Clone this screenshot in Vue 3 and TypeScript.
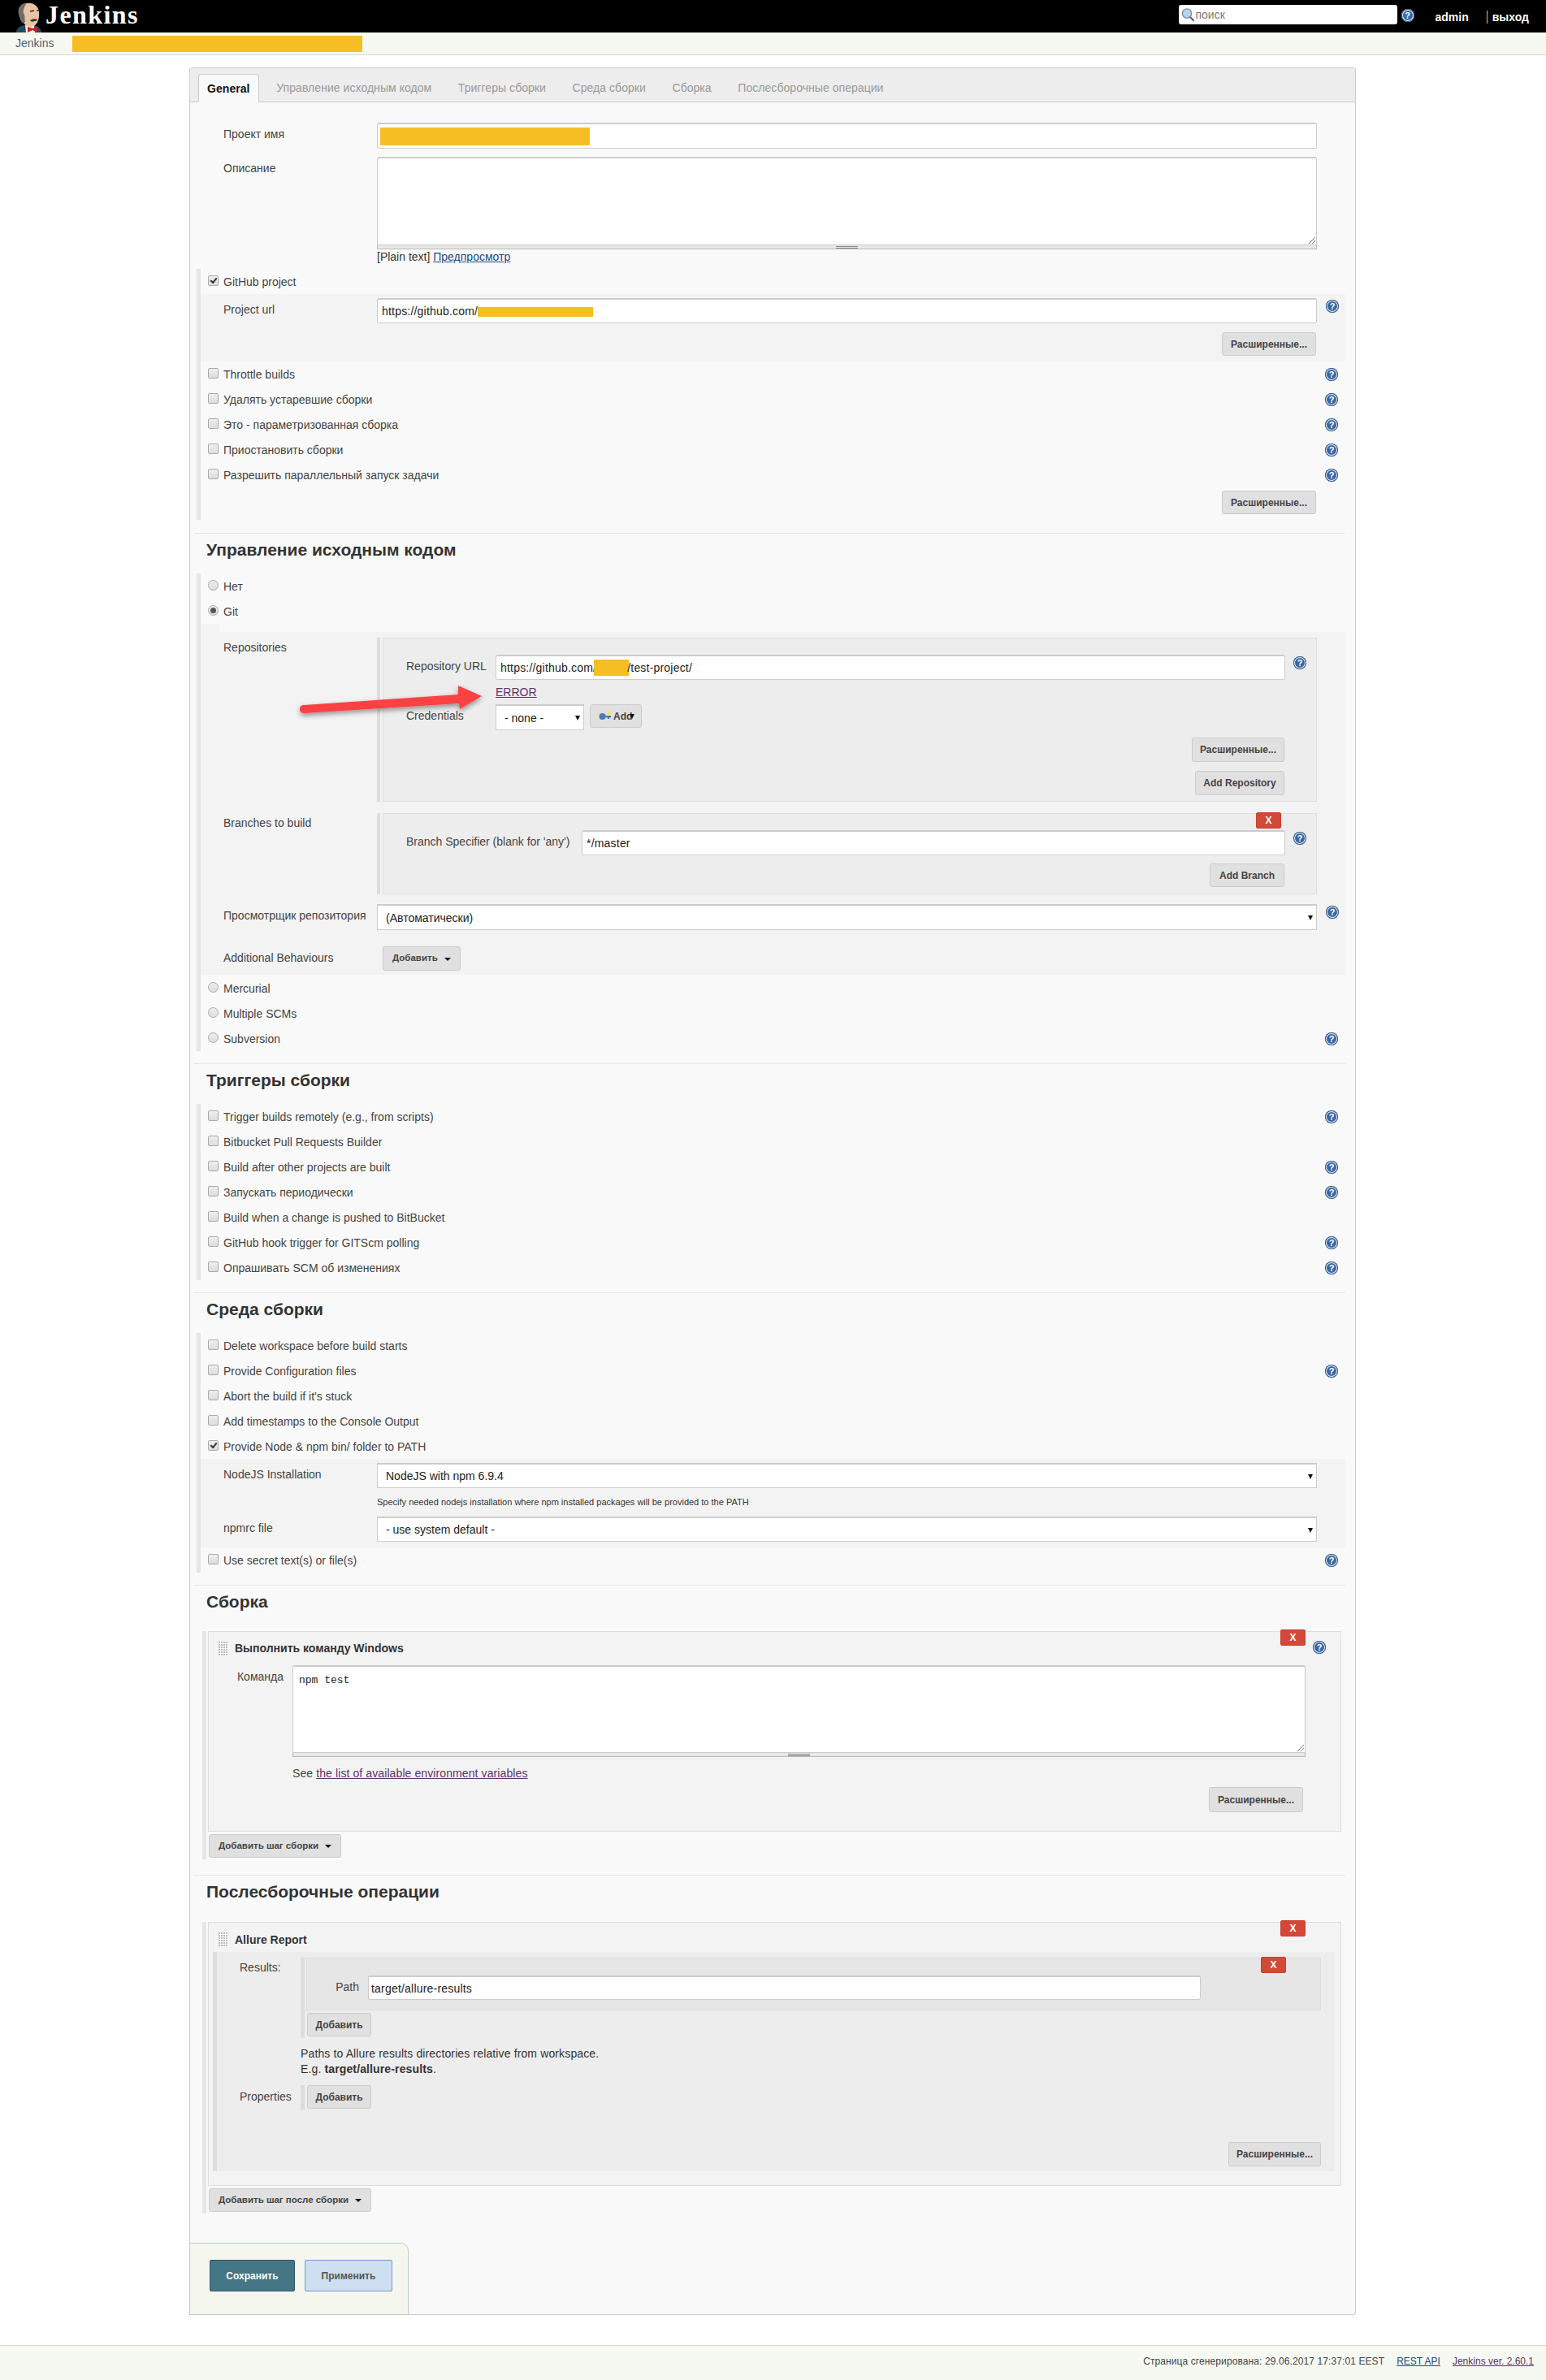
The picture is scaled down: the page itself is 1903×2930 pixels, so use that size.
<script setup lang="ts">
const tabs: string[] = ['Управление исходным кодом', 'Триггеры сборки', 'Среда сборки', 'Сборка', 'Послесборочные операции']
interface Row { label: string; help: boolean; checked?: boolean }
const generalRows: Row[] = [
  { label: 'Throttle builds', help: true },
  { label: 'Удалять устаревшие сборки', help: true },
  { label: 'Это - параметризованная сборка', help: true },
  { label: 'Приостановить сборки', help: true },
  { label: 'Разрешить параллельный запуск задачи', help: true },
]
const scmTail: Row[] = [
  { label: 'Mercurial', help: false },
  { label: 'Multiple SCMs', help: false },
  { label: 'Subversion', help: true },
]
const triggerRows: Row[] = [
  { label: 'Trigger builds remotely (e.g., from scripts)', help: true },
  { label: 'Bitbucket Pull Requests Builder', help: false },
  { label: 'Build after other projects are built', help: true },
  { label: 'Запускать периодически', help: true },
  { label: 'Build when a change is pushed to BitBucket', help: false },
  { label: 'GitHub hook trigger for GITScm polling', help: true },
  { label: 'Опрашивать SCM об изменениях', help: true },
]
const envRows: Row[] = [
  { label: 'Delete workspace before build starts', help: false },
  { label: 'Provide Configuration files', help: true },
  { label: "Abort the build if it's stuck", help: false },
  { label: 'Add timestamps to the Console Output', help: false },
  { label: 'Provide Node & npm bin/ folder to PATH', help: false, checked: true },
]
</script>

<template>
  <div class="page">
    <header class="top">
      <div class="brand">
        <svg class="logo" width="34" height="40" viewBox="0 0 34 40">
          <path d="M0 40c0-5 4-8 10-9h12c4 1 8 3 9 9z" fill="#1f4a66" />
          <path d="M11 31h11l1 9H12z" fill="#eee" />
          <path d="M4 17C2 9 6 4 13 4c8-1 14 3 15 11 1 9-3 18-10 18-6 0-9-4-10-8z" fill="#e9c4a4" />
          <path d="M13 4C6 4 1 9 3 18c1 5 3 9 6 11l2-2c-1-3 0-6-1-9-1-2-2-3-1-6 1-4 2-6 4-8z" fill="#6f6f6a" />
          <path d="M17 25c3-2 6-2 9-1-1 2-2 2-4 2-1 1-4 1-5-1z" fill="#333" />
          <path d="M17 14l5-1M25 13l3 0" stroke="#333" stroke-width="1.4" fill="none" />
          <path d="M14 33l6 2 6-2v7l-6-3-6 3z" fill="#c6201f" />
        </svg>
        <span class="wordmark">Jenkins</span>
      </div>
      <div class="tools">
        <div class="search">
          <svg width="17" height="18" viewBox="0 0 17 18">
            <path d="M10 11l5 5" stroke="#666" stroke-width="2.4" stroke-linecap="round" />
            <circle cx="7" cy="7.5" r="5.6" fill="#b9d3ec" stroke="#7b8fa3" stroke-width="1.4" />
          </svg>
          <span>поиск</span>
        </div>
        <span class="help top-help">?</span>
        <a class="user">admin</a>
        <a class="logout">выход</a>
      </div>
    </header>

    <nav class="crumb">
      <a class="crumb-link">Jenkins</a>
      <span class="redact crumb-red"></span>
    </nav>

    <main class="main">
      <form class="panel" @submit.prevent>
        <div class="tabs">
          <span class="tab active">General</span>
          <span class="tab-gap"></span>
          <span v-for="t in tabs" :key="t" class="tab">{{ t }}</span>
        </div>

        <div class="body">
          <div class="field free">
            <label class="lbl">Проект имя</label>
            <div class="input name-input"><span class="redact name-red"></span></div>
          </div>
          <div class="field free desc">
            <label class="lbl">Описание</label>
            <div>
              <div class="textarea tall"><i class="corner"></i></div>
              <div class="grip"><i></i></div>
              <div class="preview">[Plain text] <a class="lnk">Предпросмотр</a></div>
            </div>
          </div>

          <section class="sec s1">
            <div class="row"><span class="check on"></span><span>GitHub project</span></div>
            <div class="block b-github">
              <div class="field">
                <label class="lbl">Project url</label>
                <div class="input">https://github.com/<span class="redact url-red"></span></div>
                <span class="help">?</span>
              </div>
              <div class="btn-line gh"><button class="btn adv">Расширенные...</button></div>
            </div>
            <div v-for="r in generalRows" :key="r.label" class="row">
              <span class="check"></span><span>{{ r.label }}</span>
              <span v-if="r.help" class="help end"></span>
            </div>
            <div class="btn-line second"><button class="btn adv">Расширенные...</button></div>
          </section>

          <div class="heading">Управление исходным кодом</div>
          <section class="sec s2">
            <div class="row"><span class="radio"></span><span>Нет</span></div>
            <div class="row"><span class="radio on"></span><span>Git</span></div>
            <div class="git-top"></div>
            <div class="block b-git">
              <div class="field repos">
                <label class="lbl t">Repositories</label>
                <div class="rep">
                  <div class="rep-box box-a">
                    <div class="inner-row url-row">
                      <label class="lbl">Repository URL</label>
                      <div class="input">https://github.com/<span class="redact repo-red"></span>/test-project/</div>
                      <span class="help">?</span>
                    </div>
                    <a class="error">ERROR</a>
                    <div class="inner-row">
                      <label class="lbl">Credentials</label>
                      <div class="cred">
                        <div class="select small"><span>- none -</span><i class="arrow"></i></div>
                        <button class="btn add-key">
                          <svg width="16" height="14" viewBox="0 0 16 14">
                            <rect x="6" y="6" width="9" height="2.4" fill="#4f7ab5" />
                            <rect x="11" y="8" width="2" height="2" fill="#4f7ab5" />
                            <circle cx="4.5" cy="7" r="4" fill="#4f7ab5" />
                            <circle cx="12.5" cy="3" r="2.2" fill="#f6e84e" />
                          </svg>
                          <span>Add</span><i class="arrow key-arrow"></i>
                        </button>
                      </div>
                    </div>
                    <div class="btn-stack">
                      <button class="btn adv b30">Расширенные...</button>
                      <button class="btn b30 repo-add">Add Repository</button>
                    </div>
                  </div>
                </div>
              </div>
              <div class="field branches">
                <label class="lbl t">Branches to build</label>
                <div class="rep">
                  <div class="rep-box box-b">
                    <button class="x x-branch">X</button>
                    <div class="inner-row branch-row">
                      <label class="lbl">Branch Specifier (blank for 'any')</label>
                      <div class="input">*/master</div>
                      <span class="help">?</span>
                    </div>
                    <div class="btn-stack one"><button class="btn">Add Branch</button></div>
                  </div>
                </div>
              </div>
              <div class="field viewer">
                <label class="lbl">Просмотрщик репозитория</label>
                <div class="select h32"><span>(Автоматически)</span><i class="arrow"></i></div>
                <span class="help">?</span>
              </div>
              <div class="field behaviours">
                <label class="lbl">Additional Behaviours</label>
                <div><button class="btn b30 drop">Добавить <i class="arrow"></i></button></div>
              </div>
            </div>
            <div class="tail">
              <div v-for="r in scmTail" :key="r.label" class="row">
                <span class="radio"></span><span>{{ r.label }}</span>
                <span v-if="r.help" class="help end"></span>
              </div>
            </div>
          </section>

          <div class="heading">Триггеры сборки</div>
          <section class="sec s3">
            <div v-for="r in triggerRows" :key="r.label" class="row">
              <span class="check"></span><span>{{ r.label }}</span>
              <span v-if="r.help" class="help end"></span>
            </div>
          </section>

          <div class="heading">Среда сборки</div>
          <section class="sec s3">
            <div v-for="r in envRows" :key="r.label" class="row">
              <span class="check" :class="{ on: r.checked }"></span><span>{{ r.label }}</span>
              <span v-if="r.help" class="help end"></span>
            </div>
            <div class="block b-node">
              <div class="field">
                <label class="lbl">NodeJS Installation</label>
                <div class="select"><span>NodeJS with npm 6.9.4</span><i class="arrow"></i></div>
              </div>
              <div class="hint">Specify needed nodejs installation where npm installed packages will be provided to the PATH</div>
              <div class="field">
                <label class="lbl">npmrc file</label>
                <div class="select"><span>- use system default -</span><i class="arrow"></i></div>
              </div>
            </div>
            <div class="row"><span class="check"></span><span>Use secret text(s) or file(s)</span><span class="help end"></span></div>
          </section>

          <div class="heading">Сборка</div>
          <section class="steps build">
            <div class="step step-build">
              <button class="x x-step">X</button>
              <div class="step-head">
                <i class="drag"></i><strong>Выполнить команду Windows</strong>
                <span class="help step-help"></span>
              </div>
              <div class="cmd">
                <label class="lbl cmd-lbl">Команда</label>
                <div>
                  <div class="textarea cmd-area">npm test<i class="corner"></i></div>
                  <div class="grip"><i></i></div>
                </div>
              </div>
              <div class="see">See <a class="lnk visited">the list of available environment variables</a></div>
              <div class="btn-line step-adv"><button class="btn adv b31">Расширенные...</button></div>
            </div>
            <button class="btn drop add-step">Добавить шаг сборки <i class="arrow"></i></button>
          </section>

          <div class="heading">Послесборочные операции</div>
          <section class="steps post">
            <div class="step step-post">
              <button class="x x-step">X</button>
              <div class="step-head allure-head">
                <i class="drag"></i><strong>Allure Report</strong>
              </div>
              <div class="allure">
                <div class="al-row al-results">
                  <label class="lbl t">Results:</label>
                  <div class="al-rep">
                    <div class="al-box">
                      <button class="x x-path">X</button>
                      <div class="path-row">
                        <label class="lbl path-lbl">Path</label>
                        <div class="input path-input">target/allure-results</div>
                      </div>
                    </div>
                    <button class="btn small-add first">Добавить</button>
                  </div>
                </div>
                <div class="al-text">
                  Paths to Allure results directories relative from workspace.<br />
                  E.g. <b>target/allure-results</b>.
                </div>
                <div class="al-row al-props">
                  <label class="lbl">Properties</label>
                  <div class="al-rep"><button class="btn small-add">Добавить</button></div>
                </div>
                <div class="btn-line al-adv"><button class="btn adv b30">Расширенные...</button></div>
              </div>
            </div>
            <button class="btn drop add-step">Добавить шаг после сборки <i class="arrow"></i></button>
          </section>

          <div class="savebar">
            <button class="save">Сохранить</button>
            <button class="apply">Применить</button>
          </div>
        </div>
      </form>
    </main>

    <footer class="foot">
      <span class="gen">Страница сгенерирована: 29.06.2017 17:37:01 EEST</span>
      <a class="lnk">REST API</a>
      <a class="lnk visited">Jenkins ver. 2.60.1</a>
    </footer>

    <svg class="red-arrow" width="250" height="60" viewBox="0 0 250 60">
      <defs>
        <filter id="arrowShadow" x="-10%" y="-30%" width="120%" height="170%">
          <feDropShadow dx="0" dy="3" stdDeviation="3" flood-color="#000" flood-opacity="0.4" />
        </filter>
      </defs>
      <path
        d="M14 32 L204 19 L204 8 L233 21 L206 37 L205 30 L15 42 Q9 42 9 37 Q9 32 14 32 Z"
        fill="#fb4343"
        filter="url(#arrowShadow)"
      />
    </svg>
  </div>
</template>

<style>
html, body { margin: 0; background: #fff; }
</style>

<style scoped>
.page {
  position: relative;
  width: 1903px;
  height: 2930px;
  overflow: hidden;
  display: flex;
  flex-direction: column;
  font: 14px/1.3 "Liberation Sans", Arial, sans-serif;
  color: #333;
  background: #fff;
}
a { cursor: pointer; }
.top {
  height: 40px;
  flex: none;
  background: #000;
  display: flex;
  justify-content: space-between;
}
.brand { display: flex; align-items: flex-start; padding-left: 20px; }
.logo { display: block; }
.wordmark {
  margin-left: 2px;
  font: bold 32px/36px "Liberation Serif", serif;
  letter-spacing: 1.4px;
  color: #fff;
}
.tools { display: flex; align-items: flex-start; color: #fff; }
.search {
  margin-top: 6px;
  width: 269px;
  height: 24px;
  box-sizing: border-box;
  background: #fff;
  border-radius: 3px;
  display: flex;
  align-items: center;
  gap: 1px;
  padding-left: 3px;
  color: #777;
  font-size: 14px;
}
.tools .top-help { margin: 11px 0 0 5px; width: 16px; height: 16px; }
.user { margin: 13px 0 0 26px; font: bold 14px/16px "Liberation Sans", sans-serif; color: #fff; }
.logout {
  margin: 13px 21px 0 22px;
  padding-left: 6px;
  border-left: 1px solid #f5be23;
  font: bold 14px/16px "Liberation Sans", sans-serif;
  color: #fff;
}
.crumb {
  height: 28px;
  flex: none;
  box-sizing: border-box;
  background: #f6f8f2;
  border-bottom: 1px solid #d3d7cf;
  display: flex;
  align-items: center;
  padding-left: 19px;
}
.crumb-link { color: #4f5f70; font-size: 14px; width: 70px; }
.redact { display: inline-block; background: #f5be23; }
.crumb-red { width: 357px; height: 20px; }
.main { flex: 1; padding: 15px 0 0 233px; }
.panel {
  width: 1436px;
  height: 2767px;
  box-sizing: border-box;
  border: 1px solid #ccc;
  border-radius: 3px;
  background: #f9f9f9;
  display: flex;
  flex-direction: column;
}
.tabs {
  height: 42px;
  flex: none;
  box-sizing: border-box;
  background: #ededed;
  border-bottom: 1px solid #ccc;
  display: flex;
  padding-left: 10px;
  padding-top: 7px;
  color: #999;
}
.tab { padding: 0 16.3px; line-height: 34px; white-space: nowrap; letter-spacing: 0.05px; }
.tab-gap { width: 5px; }
.tab.active {
  padding: 0 10px;
  width: 75px;
  box-sizing: border-box;
  height: 35px;
  color: #111;
  font-weight: bold;
  background: #f9f9f9;
  border: 1px solid #ccc;
  border-bottom: 0;
  border-radius: 4px 4px 0 0;
}
.body { flex: 1; padding-top: 25px; display: flex; flex-direction: column; }
.field {
  display: grid;
  grid-template-columns: 189px 1157px 35px;
  padding-left: 28px;
  align-items: start;
}
.field.free { padding-left: 41px; margin-bottom: 10px; }
.field.free.desc { margin-bottom: 0; height: 138px; }
.lbl { line-height: 28px; white-space: nowrap; color: #444; }
.lbl.t { line-height: 24px; }
.input {
  height: 31px;
  box-sizing: border-box;
  border: 1px solid #ccc;
  border-top-width: 2px;
  border-radius: 3px;
  background: #fff;
  padding-left: 5px;
  line-height: 30px;
  color: #222;
  white-space: nowrap;
  display: flex;
  align-items: center;
  letter-spacing: 0.2px;
}
.name-input { height: 32px; padding-left: 3px; }
.name-red { width: 258px; height: 22px; }
.url-red { width: 142px; height: 12px; margin-top: 2px; }
.repo-red { width: 43px; height: 20px; margin-left: -3px; margin-right: -2px; }
.textarea {
  position: relative;
  box-sizing: border-box;
  background: #fff;
  border: 1px solid #ccc;
  border-top-width: 2px;
  border-radius: 3px 3px 0 0;
}
.tall { height: 109px; }
.corner {
  position: absolute;
  right: 1px;
  bottom: 1px;
  width: 8px;
  height: 8px;
  background: linear-gradient(135deg, transparent 45%, #777 46%, #777 54%, transparent 55%, transparent 72%, #777 73%, #777 80%, transparent 81%);
}
.grip {
  height: 5px;
  box-sizing: border-box;
  background: #e8e8e6;
  border: 1px solid #bbb;
  border-top: 0;
  display: flex;
  justify-content: center;
  align-items: center;
}
.grip i {
  width: 27px;
  height: 3px;
  box-sizing: border-box;
  border-top: 1px solid #888;
  border-bottom: 1px solid #888;
}
.preview { line-height: 18px; }
.lnk { color: #204a87; text-decoration: underline; }
.lnk.visited { color: #5c3566; }
.sec {
  margin: 0 12px 0 8px;
  border-left: 5px solid #e6e6e6;
  position: relative;
}
.s1 { padding-bottom: 7px; margin-bottom: 16px; }
.s2 { margin-bottom: 15px; }
.s3 { margin-bottom: 15px; }
.row {
  height: 31px;
  box-sizing: border-box;
  padding: 1px 0 0 9px;
  display: flex;
  align-items: center;
  gap: 6px;
  color: #444;
}
.check {
  width: 13px;
  height: 13px;
  box-sizing: border-box;
  margin-bottom: 4px;
  border: 1px solid #aaa;
  border-radius: 2px;
  background: linear-gradient(#eee, #ddd);
  display: inline-flex;
  align-items: center;
  justify-content: center;
}
.check.on::after {
  content: "";
  width: 6px;
  height: 3px;
  margin-top: -2px;
  border-left: 2px solid #333;
  border-bottom: 2px solid #333;
  transform: rotate(-50deg);
}
.radio {
  width: 13px;
  height: 13px;
  box-sizing: border-box;
  margin-bottom: 4px;
  border: 1px solid #aaa;
  border-radius: 50%;
  background: linear-gradient(#eee, #ddd);
  display: inline-flex;
  align-items: center;
  justify-content: center;
}
.radio.on::after {
  content: "";
  width: 7px;
  height: 7px;
  border-radius: 50%;
  background: #555;
}
.help {
  width: 16px;
  height: 16px;
  box-sizing: border-box;
  border-radius: 50%;
  background: #3a66a3;
  box-shadow: inset 0 0 0 1px #2b5288, inset 0 0 0 2px #e8eef6;
  color: #fff;
  font: bold 11px/16px "Liberation Sans", sans-serif;
  text-align: center;
  display: inline-block;
  margin-left: 11px;
  margin-top: 2px;
}
.help.end { margin: 0 9px 0 auto; position: relative; }
.help.end::before { content: "?"; }
.block { background: #f3f3f3; }
.b-github { padding: 5px 0 7px; }
.btn-line { display: flex; justify-content: flex-end; }
.gh { margin-top: 11px; padding-right: 36px; }
.second { margin-top: 4px; padding-right: 36px; }
.btn {
  height: 29px;
  box-sizing: border-box;
  padding: 0 11px;
  border: 1px solid #ccc;
  border-radius: 3px;
  background: #e0e0e0;
  color: #444;
  font: bold 12px/1 "Liberation Sans", sans-serif;
  white-space: nowrap;
}
.adv { width: 116px; padding: 0; }
.b30 { height: 30px; }
.b31 { height: 31px; }
.git-top { width: 23px; height: 10px; background: #f3f3f3; }
.b-git { padding: 7px 0 5px; }
.rep { border-left: 4px solid #ddd; padding-left: 3px; }
.rep-box { position: relative; border: 1px solid #ddd; background: #ededed; }
.box-a { padding: 20px 0 7px 28px; }
.box-b { padding: 20px 0 8px 28px; }
.inner-row { display: grid; grid-template-columns: 110px 972px 37px; align-items: start; }
.branch-row { grid-template-columns: 216px 866px 37px; }
.inner-row .help { margin-left: 10px; }
.error {
  display: block;
  margin-left: 110px;
  height: 30px;
  line-height: 30px;
  color: #5c3566;
  text-decoration: underline;
}
.cred { display: flex; gap: 7px; align-items: flex-start; }
.select {
  position: relative;
  height: 31px;
  box-sizing: border-box;
  border: 1px solid #ccc;
  border-top-width: 2px;
  background: #fff;
  padding-left: 10px;
  line-height: 30px;
  color: #222;
  display: flex;
  align-items: center;
}
.h32 { height: 32px; }
.select .arrow { position: absolute; right: 4px; top: 12px; }
.select.small { width: 109px; height: 32px; }
.arrow {
  display: inline-block;
  width: 0;
  height: 0;
  border-left: 3.5px solid transparent;
  border-right: 3.5px solid transparent;
  border-top: 6px solid #111;
}
.add-key {
  width: 64px;
  padding: 0 0 0 10px;
  display: inline-flex;
  align-items: center;
  gap: 2px;
  position: relative;
}
.key-arrow { position: absolute; right: 8px; top: 11px; margin: 0; }
.btn-stack {
  display: flex;
  flex-direction: column;
  align-items: flex-end;
  gap: 11px;
  margin-top: 9px;
  padding-right: 39px;
}
.btn-stack.one { margin-top: 10px; }
.adv.b30 { width: 114px; }
.repo-add { width: 110px; padding: 0; }
.repos { margin-bottom: 14px; }
.branches { margin-bottom: 12px; }
.viewer { margin-bottom: 20px; }
.behaviours .btn { margin-left: 7px; }
.drop { display: inline-flex; align-items: center; gap: 8px; font-size: 11.5px; }
.drop .arrow { border-left-width: 4px; border-right-width: 4px; border-top-width: 4px; margin-top: 1px; }
.x {
  position: absolute;
  height: 20px;
  width: 31px;
  padding: 0;
  background: #d24939;
  border: 1px solid #c9402f;
  border-radius: 2px;
  color: #fff;
  font: bold 12px/1 "Liberation Sans", sans-serif;
}
.x-branch { right: 43px; top: -2px; }
.tail { margin-top: 1px; }
.b-node { padding: 5px 0 7px; }
.hint { margin-left: 217px; height: 35px; line-height: 34px; font-size: 11px; color: #333; }
.heading {
  margin: 0 12px 0 5px;
  height: 50px;
  box-sizing: border-box;
  border-top: 1px solid #e5e5e5;
  padding-left: 15px;
  font: bold 21px/40px "Liberation Sans", sans-serif;
  color: #333;
  flex: none;
}
.steps {
  margin: 0 17px 0 15px;
  border-left: 5px solid #e6e6e6;
  padding-left: 2px;
}
.build { margin-top: 7px; padding-bottom: 2px; margin-bottom: 19px; }
.post { margin-top: 8px; padding-bottom: 2px; }
.step {
  position: relative;
  box-sizing: border-box;
  border: 1px solid #ddd;
  background: #f3f3f3;
}
.x-step { right: 43px; top: -3px; }
.step-head {
  height: 41px;
  display: flex;
  align-items: center;
  padding-left: 12px;
  position: relative;
  color: #333;
}
.step-head strong { margin-left: 8px; }
.drag {
  width: 12px;
  height: 18px;
  background:
    radial-gradient(circle at 1px 1px, #bbb 0.8px, transparent 1px) 0 0 / 3px 3px,
    #fbfbfb;
}
.step-help { position: absolute; right: 18px; top: 11px; margin: 0; }
.step-help::before { content: "?"; }
.cmd { display: grid; grid-template-columns: 103px 1247px; }
.cmd-lbl { text-align: right; padding-right: 11px; }
.cmd-area {
  height: 108px;
  padding: 9px 0 0 7px;
  font: 13px/16px "Liberation Mono", monospace;
  color: #222;
}
.see { height: 37px; line-height: 40px; padding-left: 103px; color: #444; letter-spacing: 0.1px; }
.step-adv { padding: 0 46px 23px 0; }
.add-step { margin: 3px 0 0 1px; height: 29px; }
.allure-head { height: 36px; padding-top: 6px; box-sizing: border-box; }
.allure {
  margin: 0 7px 17px 5px;
  border-left: 5px solid #ddd;
  background: #ededed;
  padding: 7px 0 6px 28px;
}
.al-row { display: grid; grid-template-columns: 75px 1256px; align-items: start; }
.al-rep { border-left: 5px solid #ddd; padding: 0 0 2px 2px; }
.al-box { position: relative; border: 1px solid #ddd; background: #e6e6e6; padding: 21px 0 12px; }
.x-path { right: 42px; top: -2px; }
.path-row { display: grid; grid-template-columns: 75px 1025px; }
.path-lbl { text-align: right; padding-right: 11px; }
.path-input { height: 30px; padding-left: 3px; }
.small-add { display: block; width: 79px; padding: 0; margin-left: 1px; }
.small-add.first { margin-top: 3px; }
.al-text { margin: 10px 0 10px 75px; line-height: 19px; letter-spacing: 0.13px; }
.al-adv { margin-top: 39px; padding-right: 17px; }
.savebar {
  margin: auto 0 -1px -1px;
  width: 270px;
  height: 89px;
  flex: none;
  box-sizing: border-box;
  background: #f5f7ef;
  border: 1px solid #b4d2c0;
  border-radius: 0 10px 0 0;
  display: flex;
  align-items: flex-start;
  padding: 20px 0 0 24px;
  gap: 12px;
}
.save, .apply {
  height: 39px;
  box-sizing: border-box;
  border-radius: 2px;
  font: bold 12px/1 "Liberation Sans", sans-serif;
}
.save { width: 105px; background: #447685; border: 1px solid #2f5a6a; color: #fff; }
.apply { width: 108px; background: #cddff0; border: 1px solid #6d9bd0; color: #555; }
.foot {
  height: 43px;
  flex: none;
  box-sizing: border-box;
  border-top: 1px solid #d3d7cf;
  background: #f6f8f2;
  display: flex;
  justify-content: flex-end;
  align-items: center;
  gap: 15px;
  padding: 0 15px 2px 0;
  font-size: 12px;
  color: #444;
}
.gen { letter-spacing: 0.1px; }
.red-arrow { position: absolute; left: 360px; top: 836px; pointer-events: none; }
</style>
